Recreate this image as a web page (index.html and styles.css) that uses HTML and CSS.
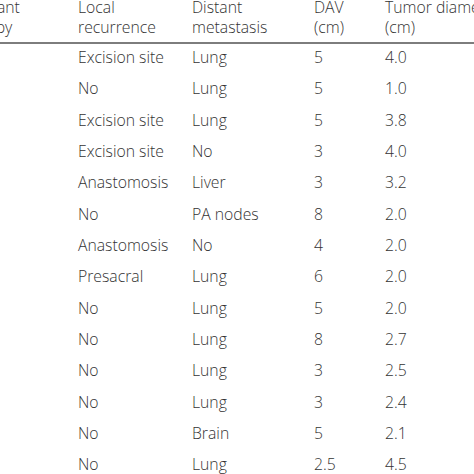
FILE: index.html
```html
<!DOCTYPE html>
<html>
<head>
<meta charset="utf-8">
<link rel="stylesheet" href="styles.css">
</head>
<body>
<div class="frame">
<table class="data">
<colgroup>
<col class="c1"><col class="c2"><col class="c3"><col class="c4"><col class="c5">
</colgroup>
<thead>
<tr><th>Adjuvant<br>therapy</th><th>Local<br>recurrence</th><th>Distant<br>metastasis</th><th>DAV<br>(cm)</th><th>Tumor diameter<br>(cm)</th></tr>
</thead>
<tbody>
<tr><td></td><td>Excision site</td><td>Lung</td><td>5</td><td>4.0</td></tr>
<tr><td></td><td>No</td><td>Lung</td><td>5</td><td>1.0</td></tr>
<tr><td></td><td>Excision site</td><td>Lung</td><td>5</td><td>3.8</td></tr>
<tr><td></td><td>Excision site</td><td>No</td><td>3</td><td>4.0</td></tr>
<tr><td></td><td>Anastomosis</td><td>Liver</td><td>3</td><td>3.2</td></tr>
<tr><td></td><td>No</td><td>PA nodes</td><td>8</td><td>2.0</td></tr>
<tr><td></td><td>Anastomosis</td><td>No</td><td>4</td><td>2.0</td></tr>
<tr><td></td><td>Presacral</td><td>Lung</td><td>6</td><td>2.0</td></tr>
<tr><td></td><td>No</td><td>Lung</td><td>5</td><td>2.0</td></tr>
<tr><td></td><td>No</td><td>Lung</td><td>8</td><td>2.7</td></tr>
<tr><td></td><td>No</td><td>Lung</td><td>3</td><td>2.5</td></tr>
<tr><td></td><td>No</td><td>Lung</td><td>3</td><td>2.4</td></tr>
<tr><td></td><td>No</td><td>Brain</td><td>5</td><td>2.1</td></tr>
<tr><td></td><td>No</td><td>Lung</td><td>2.5</td><td>4.5</td></tr>
</tbody>
</table>
</div>
</body>
</html>
```
FILE: styles.css
```css
html, body {
  margin: 0;
  padding: 0;
  background: #fff;
}
.frame {
  width: 474px;
  height: 474px;
  overflow: hidden;
  position: relative;
}
.data {
  border-collapse: collapse;
  table-layout: fixed;
  width: 644px;
  margin-left: -42px;
  margin-top: -3px;
  font-family: "Open Sans", "Liberation Sans", sans-serif;
  font-weight: 300;
  font-size: 15.75px;
  color: #333;
}
.c1 { width: 120px; }
.c2 { width: 114px; }
.c3 { width: 122px; }
.c4 { width: 71px; }
.c5 { width: 217px; }
.data th {
  text-align: left;
  font-weight: 300;
  line-height: 20px;
  padding: 0 0 5px 0;
  border-bottom: 2px solid #7d7d7d;
  white-space: nowrap;
  vertical-align: top;
}
.data td {
  line-height: 20px;
  padding: 3px 0 8.33px 0;
  white-space: nowrap;
  vertical-align: top;
}
```
